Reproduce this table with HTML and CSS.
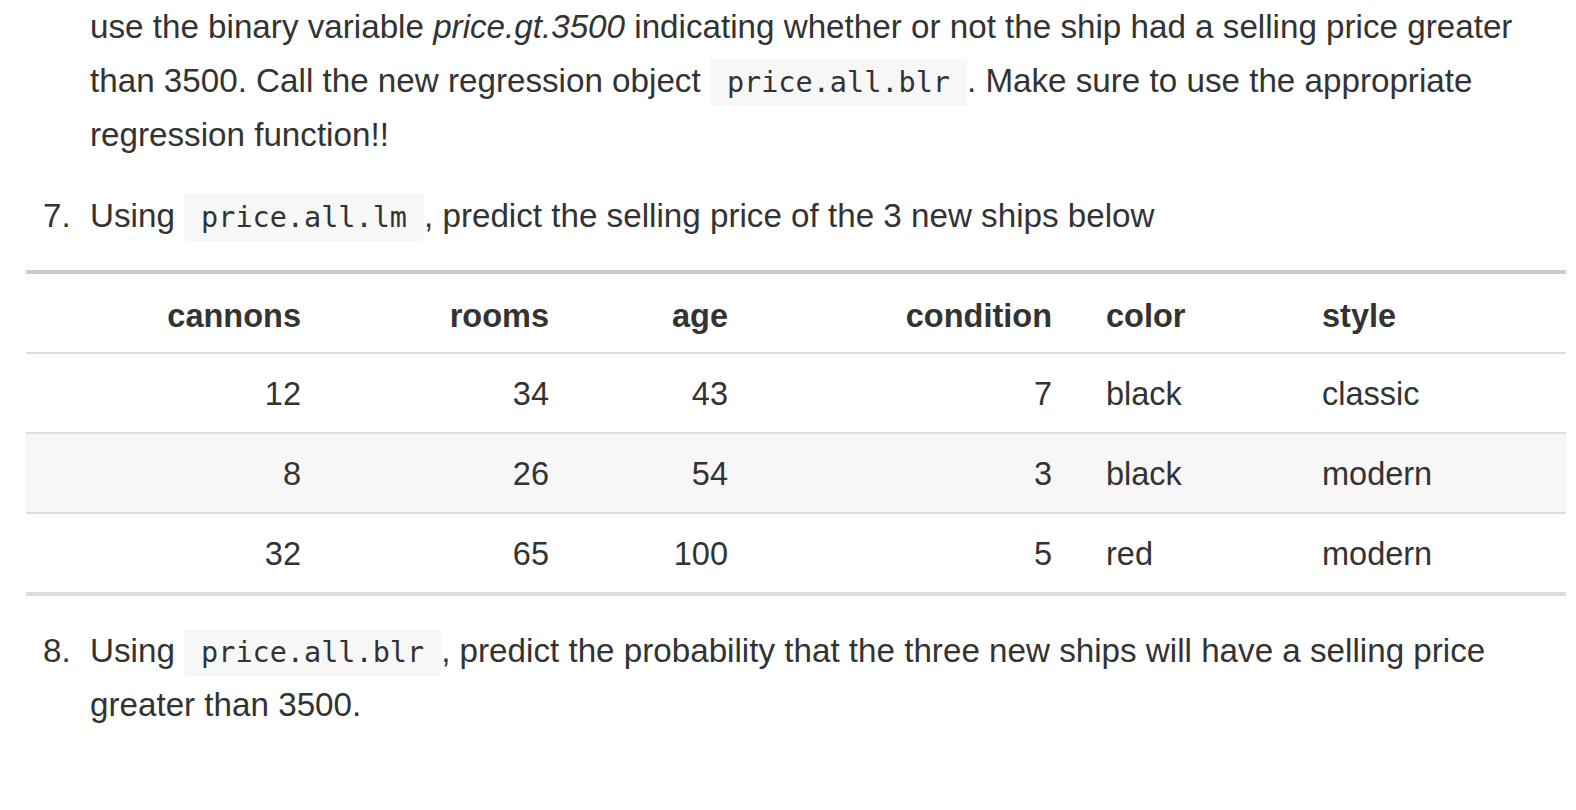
FILE: index.html
```html
<!DOCTYPE html>
<html lang="en">
<head>
<meta charset="utf-8">
<title>Exercises</title>
<link rel="stylesheet" href="styles.css">
</head>
<body>
<div class="page">
  <ol class="tasks" start="7">
    <li class="cont">
      <p>use the binary variable <em>price.gt.3500</em> indicating whether or not the ship had a selling price greater than 3500. Call the new regression object <code>price.all.blr</code>. Make sure to use the appropriate regression function!!</p>
    </li>
    <li>
      <p>Using <code>price.all.lm</code>, predict the selling price of the 3 new ships below</p>
    </li>
  </ol>

  <table class="ships">
    <colgroup>
      <col class="c1"><col class="c2"><col class="c3"><col class="c4"><col class="c5"><col class="c6">
    </colgroup>
    <thead>
      <tr>
        <th class="num">cannons</th>
        <th class="num">rooms</th>
        <th class="num">age</th>
        <th class="num">condition</th>
        <th>color</th>
        <th>style</th>
      </tr>
    </thead>
    <tbody>
      <tr>
        <td class="num">12</td><td class="num">34</td><td class="num">43</td><td class="num">7</td><td>black</td><td>classic</td>
      </tr>
      <tr>
        <td class="num">8</td><td class="num">26</td><td class="num">54</td><td class="num">3</td><td>black</td><td>modern</td>
      </tr>
      <tr>
        <td class="num">32</td><td class="num">65</td><td class="num">100</td><td class="num">5</td><td>red</td><td>modern</td>
      </tr>
    </tbody>
  </table>

  <ol class="tasks" start="8">
    <li>
      <p>Using <code>price.all.blr</code>, predict the probability that the three new ships will have a selling price greater than 3500.</p>
    </li>
  </ol>
</div>
</body>
</html>
```

FILE: styles.css
```css
html, body {
  margin: 0;
  padding: 0;
  background: #ffffff;
}

body {
  font-family: "Liberation Sans", Arial, sans-serif;
  font-size: 33.2px;
  line-height: 54px;
  color: #333333;
}

.page {
  padding: 0 10px 0 26px;
}

.tasks {
  margin: 0;
  padding: 0 30px 0 64px;
}

.tasks li.cont {
  display: block;
}

.tasks li::marker {
  content: counter(list-item) ".\2002\200A";
}

.tasks p {
  margin: 0 0 27px 0;
}

em {
  font-style: italic;
}

code {
  font-family: "DejaVu Sans Mono", "Liberation Mono", monospace;
  font-size: 28.5px;
  line-height: 1;
  background: #f7f7f7;
  padding: 7px 17px;
  border-radius: 2px;
}

.ships {
  width: 1540px;
  table-layout: fixed;
  border-collapse: collapse;
  margin: 27px 0 28px 0;
  border-top: 4px solid #cccccc;
  border-bottom: 4px solid #dddddd;
  font-size: 32.5px;
}

.c1 { width: 302px; }
.c2 { width: 248px; }
.c3 { width: 179px; }
.c4 { width: 324px; }
.c5 { width: 216px; }
.c6 { width: 271px; }

.ships th,
.ships td {
  padding: 0 27px;
  text-align: left;
  line-height: 40px;
  vertical-align: middle;
}

.ships th {
  font-weight: bold;
  height: 72px;
  padding-top: 6px;
  border-bottom: 2px solid #dddddd;
}

.ships td {
  height: 76px;
  padding-top: 2px;
}

.ships tbody tr + tr td {
  border-top: 2px solid #dddddd;
}

.ships tbody tr:nth-child(2) td {
  background: #f7f7f7;
}

.ships .num {
  text-align: right;
}
```
